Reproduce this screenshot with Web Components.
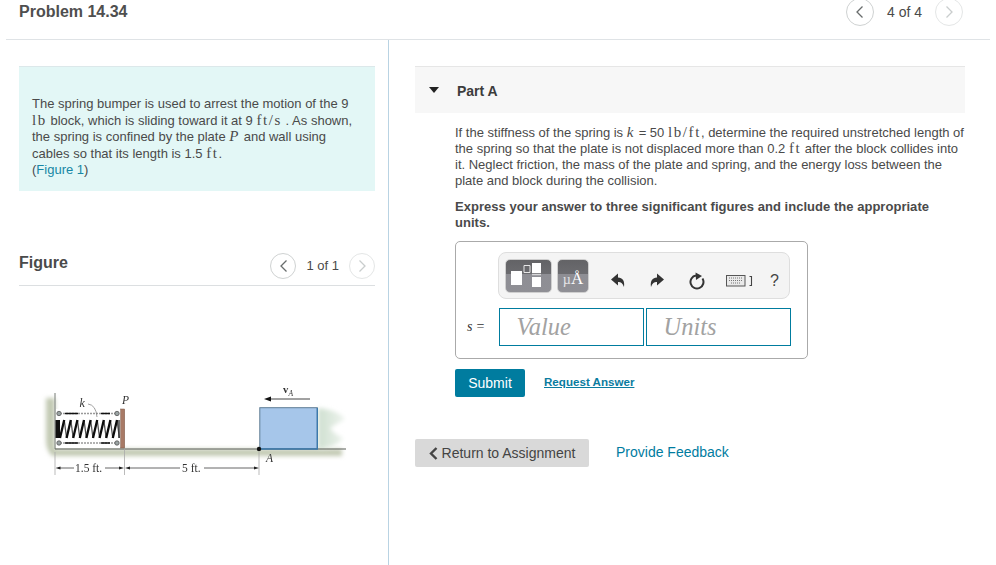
<!DOCTYPE html>
<html lang="en">
<head>
<meta charset="utf-8">
<title>Problem 14.34</title>
<style>
html,body{margin:0;padding:0;background:#fff;height:100%;overflow:hidden}
body{font:13px/16px "Liberation Sans",Arial,sans-serif;color:#4a4a4a}
</style>
</head>
<body>
<mp-page>
  <mp-header slot="header" current="4 of 4">Problem 14.34</mp-header>
  <mp-problem slot="left">
    <mp-line>The spring bumper is used to arrest the motion of the 9</mp-line>
    <mp-line><mp-math>lb</mp-math> block, which is sliding toward it at 9 <mp-math>ft/s</mp-math> . As shown,</mp-line>
    <mp-line>the spring is confined by the plate <mp-math italic>P</mp-math> and wall using</mp-line>
    <mp-line>cables so that its length is 1.5 <mp-math>ft</mp-math>.</mp-line>
    <mp-line><mp-link>(<a>Figure 1</a>)</mp-link></mp-line>
  </mp-problem>
  <mp-figure slot="left"></mp-figure>
  <mp-part slot="right" name="Part A">
    <p>
      <mp-line>If the stiffness of the spring is <mp-math italic>k</mp-math> = 50 <mp-math>lb/ft</mp-math>, determine the required unstretched length of</mp-line>
      <mp-line>the spring so that the plate is not displaced more than 0.2 <mp-math>ft</mp-math> after the block collides into</mp-line>
      <mp-line>it. Neglect friction, the mass of the plate and spring, and the energy loss between the</mp-line>
      <mp-line>plate and block during the collision.</mp-line>
    </p>
    <b>Express your answer to three significant figures and include the appropriate units.</b>
  </mp-part>
  <mp-answer slot="right"></mp-answer>
  <mp-footer slot="right"></mp-footer>
</mp-page>
<script>
function make(name, html, init){
  customElements.define(name, class extends HTMLElement{
    constructor(){super();this.attachShadow({mode:'open'}).innerHTML=html;}
    connectedCallback(){ if(init) init(this); }
  });
}
let front='',back='';
for(let i=0;i<9;i++){const x=60+i*6.6;front+=`M${x} 438L${x+4.2} 420`;back+=`M${x+4.2} 420L${x+6.6} 438`;}
make('mp-line',`<style>:host{display:block;white-space:nowrap}</style><slot></slot>`);
make('mp-math',`<style>:host{display:inline;font-family:"Liberation Serif","DejaVu Serif",serif;font-size:15px;line-height:0;letter-spacing:1.600px}</style><slot></slot>`,el=>{
  if(el.hasAttribute('italic')) el.style.fontStyle='italic';
});
make('mp-link',`<style>:host{display:inline}::slotted(a){color:#1787a5}</style><slot></slot>`);
make('mp-pager',`<style>
:host{display:inline-flex;align-items:center;color:#4a4a4a;font-size:var(--fs,14px);line-height:16px;--d:26px;--gap:9.500px}
.c{box-sizing:border-box;width:var(--d);height:var(--d);border:1px solid #cfd2d2;border-radius:50%;display:flex;align-items:center;justify-content:center;flex:none}
.c.off{border-color:#e4e6e6}
.c.off svg{stroke:#c9cdcd}
svg{width:9px;height:14px;fill:none;stroke:#686c6c;stroke-width:1.300}
span{margin:0 var(--gap)}
</style>
<div class="c"><svg viewBox="0 0 9 14"><path d="M7.500 1.500 2 7l5.500 5.500"/></svg></div>
<span><slot></slot></span>
<div class="c off"><svg viewBox="0 0 9 14"><path d="M1.500 1.500 7 7l-5.500 5.500"/></svg></div>`);
make('mp-page',`<style>
:host{display:block;padding:0 6px;height:565px;box-sizing:border-box}
.main{display:grid;grid-template-columns:383px 1fr;height:525px}
.l{border-right:1px solid #b9d3e3;box-sizing:border-box;padding:26px 13px 0 13px}
.r{padding:26px 25px 0 26px;min-width:0}
</style>
<slot name="header"></slot>
<div class="main"><div class="l"><slot name="left"></slot></div><div class="r"><slot name="right"></slot></div></div>`);
make('mp-header',`<style>
:host{display:flex;justify-content:space-between;align-items:flex-start;height:40px;box-sizing:border-box;border-bottom:1px solid #dfe3e6;padding:0 27px 0 13px}
h1{margin:3px 0 0;font:bold 16px/18px "Liberation Sans",Arial,sans-serif;color:#4f4f4f}
mp-pager{--d:28px;--gap:13px;margin-top:-2px}
</style>
<h1><slot></slot></h1><mp-pager></mp-pager>`,el=>{el.shadowRoot.querySelector('mp-pager').textContent=el.getAttribute('current');});
make('mp-problem',`<style>
:host{display:block;background:#e3f7f6;border-top:1px solid #dce8ea;height:125px;box-sizing:border-box;padding:29px 13px 0 13px;color:#4a4a4a;line-height:16.500px}
</style><slot></slot>`);
make('mp-figure',`<style>
:host{display:block;margin-top:63px}
.h{display:flex;justify-content:space-between;align-items:flex-start;height:31px;border-bottom:1px solid #dcdfe1}
h2{margin:0;font:bold 16px/18px "Liberation Sans",Arial,sans-serif;color:#4a4a4a}
mp-pager{--fs:13px;--gap:10px;margin-top:-1px}
svg{display:block;margin:99px 0 0 21px;filter:blur(.3px)}
text{font-family:"Liberation Serif",serif;fill:#333}
</style>
<div class="h"><h2>Figure</h2><mp-pager>1 of 1</mp-pager></div>
<svg width="310" height="95" viewBox="40 385 310 95">
  <defs>
    <filter id="b" x="-30%" y="-30%" width="160%" height="160%"><feGaussianBlur stdDeviation="2.200"/></filter>
    <linearGradient id="gg" x1="0" y1="0" x2="1" y2="0"><stop offset="0" stop-color="#cfdfd0"/><stop offset="1" stop-color="#eef4ee"/></linearGradient>
  </defs>
  <path d="M46 398H55V449H342V456H52Q46 450 46 440Z" fill="#c3cab4" filter="url(#b)"/>
  <path d="M318 408Q338 410 345 419Q335 425 330 428Q335 435 343 438Q338 447 318 449Z" fill="url(#gg)" filter="url(#b)"/>
  <path d="M55 393V449" stroke="#8a8f8a" stroke-width="1.200" fill="none"/>
  <path d="M55 449H346" stroke="#5a5f58" stroke-width="1.200" fill="none"/>
  <rect x="56" y="409" width="64.500" height="39" fill="#fff"/>
  <path d="M60 413.500H117M60 443H117" stroke="#999" stroke-width="1.300" stroke-dasharray="2 1" fill="none"/>
  <path d="M65 413.500H78M101 413.500H110M65 443H78M101 443H110" stroke="#111" stroke-width="1.600" fill="none"/>
  <g fill="#9aa3a3" stroke="#555" stroke-width=".8"><circle cx="59" cy="413.500" r="2.200"/><circle cx="59" cy="443" r="2.200"/><circle cx="117" cy="413.500" r="2.200"/><circle cx="117" cy="443" r="2.200"/></g>
  <rect x="55.500" y="420" width="4.500" height="18" fill="#111"/>
  <path d="${back}" fill="none" stroke="#555" stroke-width="1.300"/>
  <path d="${front}" fill="none" stroke="#0c0c0c" stroke-width="2.300"/>
  <path d="M119 420V438" stroke="#333" stroke-width="1.400"/>
  <rect x="120.700" y="409" width="4" height="39" fill="#a87a66" stroke="#7c5a4a" stroke-width=".5"/>
  <path d="M88 404Q96 405 97 417" stroke="#777" stroke-width=".7" fill="none"/>
  <text x="79.500" y="407" font-size="12" font-style="italic">k</text>
  <text x="122" y="404" font-size="11.500" font-style="italic">P</text>
  <rect x="259.800" y="407.700" width="57.500" height="41" fill="#a6c6ea" stroke="#5f7d94" stroke-width="1"/>
  <path d="M317.300 408V449H260" fill="none" stroke="#3a78ac" stroke-width="1.300"/>
  <circle cx="259" cy="449" r="2.200" fill="#111"/>
  <path d="M55 452V475M124.500 449V475M259 452V475" stroke="#aaa" stroke-width=".8" fill="none"/>
  <path d="M59 468H74M105 468H120M128 468H180M204 468H255" stroke="#555" stroke-width=".9" fill="none"/>
  <path d="M55.500 468l5-1.500v3zM124 468l-5-1.500v3zM125 468l5-1.500v3zM259 468l-5-1.500v3z" fill="#222"/>
  <text x="75" y="472" font-size="11.500">1.5 ft.</text>
  <text x="182" y="472" font-size="11.500">5 ft.</text>
  <path d="M270 399H310" stroke="#444" stroke-width="1" fill="none"/>
  <path d="M264 399l7-2.500v5z" fill="#111"/>
  <text x="283" y="393" font-size="10.500" font-weight="bold">v</text>
  <text x="288.500" y="395.500" font-size="7.500" font-style="italic">A</text>
  <text x="266" y="462" font-size="11.500" font-style="italic">A</text>
</svg>`);
make('mp-part',`<style>
:host{display:block}
.h{background:#f7f7f7;border-top:1px solid #e6e6e6;height:47px;box-sizing:border-box;display:flex;align-items:center;font:bold 14px/18px "Liberation Sans",Arial,sans-serif;color:#3c3c3c;padding-left:14px}
.t{width:0;height:0;border:5.500px solid transparent;border-top:6.500px solid #222;border-bottom:0;margin-right:18px}
#n{position:relative;top:1px}
.b{padding:12px 0 0 40px;color:#4a4a4a}
::slotted(p){margin:0 0 10px}
::slotted(b){display:block;letter-spacing:.03px}
</style>
<div class="h"><i class="t"></i><span id="n"></span></div>
<div class="b"><slot></slot></div>`,el=>{el.shadowRoot.getElementById('n').textContent=el.getAttribute('name');});
make('mp-toolbar',`<style>
:host{display:flex;align-items:center;box-sizing:border-box;width:292px;height:47px;background:#f4f4f4;border:1px solid #dedede;border-radius:8px;padding:0 0 0 6px;margin-left:42px;color:#333}
.tb{box-sizing:border-box;height:34px;border-radius:5px;border:1px solid #cfcfcf;background:linear-gradient(#636366 0,#6c6c70 45%,#8e8e94 45%,#8f8f95 100%);flex:none;position:relative;overflow:hidden}
.one{width:47px;margin-right:5px}
.two{width:32px;color:#fff;font:17px/34px "Liberation Serif",serif;text-align:center;margin-right:21px}
.two span{position:relative;top:2px}
.two small{font-size:14px;color:#e4e4e6}
.ic{display:flex;align-items:center;margin-top:10px;flex:none}
svg{display:block;flex:none}
</style>
<div class="tb one"><svg width="45" height="32" viewBox="0 0 45 32"><path d="M5 11h11v14H5zM26 3h9v10h-9zM26 17h9v10h-9z" fill="#fff"/><path d="M26 14.500h9" stroke="#d6d6d8" stroke-width="1.500"/><path d="M18 5.500h6v7h-6z" fill="none" stroke="#e6e6e6" stroke-width="1"/></svg></div>
<div class="tb two"><span><small>µ</small>Å</span></div>
<div class="ic">
<svg width="16" height="16" viewBox="0 0 16 16" style="margin-right:23px"><path d="M1 6.500 8 .5V4.500C12.500 4.500 15 8 14 14 12.500 10 11 9 8 9V12.500Z" fill="#333"/></svg>
<svg width="16" height="16" viewBox="0 0 16 16" style="margin-right:23px"><path d="M15 6.500 8 .5V4.500C3.500 4.500 1 8 2 14 3.500 10 5 9 8 9V12.500Z" fill="#333"/></svg>
<svg width="18" height="18" viewBox="0 0 18 18" style="margin-right:20px"><path d="M14.500 6.500A6.500 6.500 0 1 1 8 3.500" fill="none" stroke="#333" stroke-width="2"/><path d="M7.500 .5 14 4 8 8Z" fill="#333"/></svg>
<svg width="28" height="12" viewBox="0 0 28 12" style="margin-right:16px"><rect x=".5" y=".5" width="18.500" height="10.500" fill="#e9e9e9" stroke="#555"/><path d="M3 3h14M3 5.500h14M5 8h10" stroke="#777" stroke-dasharray="1 1" fill="none"/><path d="M23.500 1.500h2v9h-2" fill="none" stroke="#444" stroke-width="1.100"/></svg>
<span style="font:16px/18px 'Liberation Sans',Arial,sans-serif;color:#444">?</span>
</div>`);
make('mp-field',`<style>
:host{display:block;box-sizing:border-box;width:145px;height:38px;border:1px solid #007c9f;padding-left:16.500px;font:italic 24.500px/35px "Liberation Serif",serif;color:#a2a2a2}
</style><slot></slot>`);
make('mp-answer',`<style>
:host{display:block;margin:10px 0 0 40px;width:353px;height:118px;box-sizing:border-box;border:1px solid #aaa;border-radius:5px;padding:10px 0 0 0}
.row{display:flex;align-items:center;margin-top:9px;gap:2px}
.s{width:41px;box-sizing:border-box;padding-left:11px;font:italic 14px/16px "Liberation Serif",serif;color:#333;letter-spacing:.3px}
.s b{font-weight:normal;font-style:normal}
</style>
<mp-toolbar></mp-toolbar>
<div class="row"><div class="s">s <b>=</b></div><mp-field>Value</mp-field><mp-field>Units</mp-field></div>`);
make('mp-button',`<style>
:host{display:inline-flex;align-items:center;justify-content:center;box-sizing:border-box;height:28px;border-radius:2px;font-size:14px;line-height:16px;background:var(--bg,#007c9f);color:var(--fg,#fff)}
</style><slot></slot>`);
make('mp-footer',`<style>
:host{display:block;margin-top:10px}
.sub{display:flex;align-items:center;padding-left:40px}
.sub mp-button{width:70px}
.req{margin-left:19px;font:bold 11.600px/14px "Liberation Sans",Arial,sans-serif;color:#0b7c9f;text-decoration:underline;position:relative;top:-1px}
.ret{display:flex;align-items:center;margin-top:42px}
.ret mp-button{width:174px;--bg:#d9d9d9;--fg:#444;gap:4px}
.fb{margin-left:27px;font-size:14px;line-height:16px;color:#007c9f;position:relative;top:-1px}
svg{display:block}
</style>
<div class="sub"><mp-button>Submit</mp-button><span class="req">Request Answer</span></div>
<div class="ret"><mp-button><svg width="9" height="13" viewBox="0 0 9 13"><path d="M7.500 1 2 6.500l5.500 5.500" fill="none" stroke="#444" stroke-width="2.400"/></svg>Return to Assignment</mp-button><span class="fb">Provide Feedback</span></div>`);
</script>
</body>
</html>
